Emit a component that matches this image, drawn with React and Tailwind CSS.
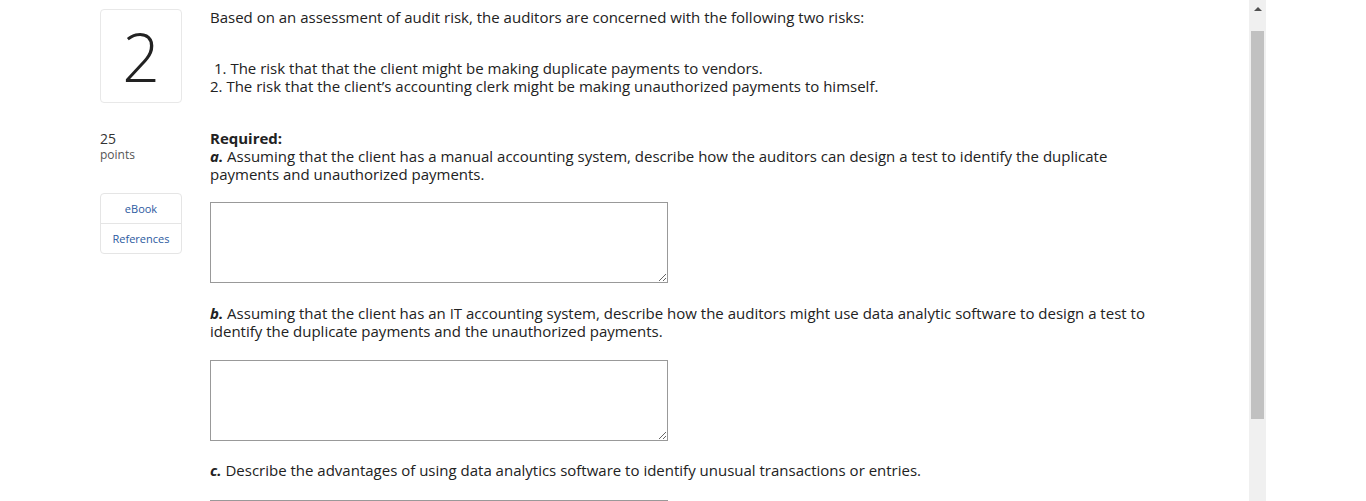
export default function App() {
  return (
    <div className="relative h-[501px] w-[1366px] overflow-hidden bg-white font-['Open_Sans',sans-serif] text-[15px] leading-[18px] text-[#222]">
      <div className="flex h-full w-[1266px]">
        <div className="flex flex-1 gap-[28px] pl-[100px] pt-[9px]">
          {/* left column */}
          <div className="flex w-[82px] shrink-0 flex-col">
            <div className="flex h-[94px] items-center justify-center rounded-[4px] border border-[#e8e8e8] text-[66px] font-light leading-none text-[#222]">
              2
            </div>
            <div className="mt-[27px] text-[14px] leading-[17px] text-[#333]">25</div>
            <div className="text-[12px] leading-[15px] text-[#555]">points</div>
            <div className="mt-[31px] flex flex-col rounded-[4px] border border-[#e5e5e5] text-[11px]">
              <div className="flex h-[30px] items-center justify-center border-b border-[#e5e5e5] text-[#2c5aa0]">eBook</div>
              <div className="flex h-[29px] items-center justify-center text-[#2c5aa0]">References</div>
            </div>
          </div>

          {/* main column */}
          <div className="w-[950px] shrink-0 -mt-[1px]">
            <p>Based on an assessment of audit risk, the auditors are concerned with the following two risks:</p>
            <div className="mt-[33px] pl-[4px]">
              <p>1. The risk that that the client might be making duplicate payments to vendors.</p>
              <p className="-ml-[4px]">2. The risk that the client’s accounting clerk might be making unauthorized payments to himself.</p>
            </div>
            <p className="mt-[34px] font-bold">Required:</p>
            <p>
              <b><i>a.</i></b> Assuming that the client has a manual accounting system, describe how the auditors can design a test to identify the duplicate payments and unauthorized payments.
            </p>
            <textarea className="mt-[19px] block h-[81px] w-[458px] border border-[#999] bg-white" />
            <p className="mt-[21px]">
              <b><i>b.</i></b> Assuming that the client has an IT accounting system, describe how the auditors might use data analytic software to design a test to identify the duplicate payments and the unauthorized payments.
            </p>
            <textarea className="mt-[20px] block h-[81px] w-[458px] border border-[#999] bg-white" />
            <p className="mt-[20px]">
              <b><i>c.</i></b> Describe the advantages of using data analytics software to identify unusual transactions or entries.
            </p>
            <textarea className="mt-[21px] block h-[81px] w-[458px] border border-[#999] bg-white" />
          </div>
        </div>

        {/* scrollbar */}
        <div className="flex w-[17px] shrink-0 flex-col items-center bg-[#f0f0f0]">
          <div className="flex h-[17px] w-full items-center justify-center">
            <div className="h-0 w-0 border-x-[4px] border-b-[4px] border-x-transparent border-b-[#505050]" />
          </div>
          <div className="mt-[14px] h-[388px] w-[13px] bg-[#c1c1c1]" />
        </div>
      </div>
    </div>
  )
}
